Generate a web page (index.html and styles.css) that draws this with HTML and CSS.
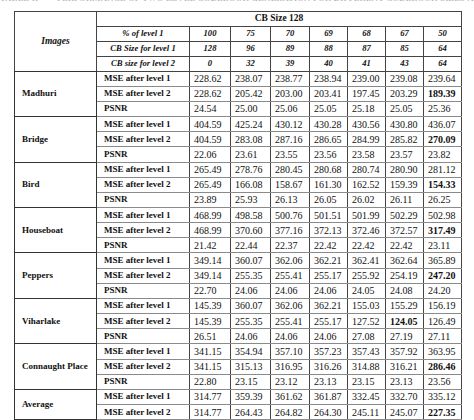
FILE: index.html
```html
<!DOCTYPE html>
<html>
<head>
<meta charset="utf-8">
<link rel="stylesheet" href="styles.css">
</head>
<body>
<div class="page">
  <div class="caption"><span class="tno">TABLE II</span><span class="ctext">PERFORMANCE OF TWO LEVEL CODEBOOK GENERATION FOR DIFFERENT CODEBOOK SIZES AT LEVEL 1 AND LEVEL 2</span></div>
  <table class="res">
    <colgroup>
      <col class="c0"><col class="c1">
      <col class="v1"><col class="v2"><col class="v3"><col class="v4"><col class="v5"><col class="v6"><col class="v7">
    </colgroup>
    <tbody class="head">
      <tr><th rowspan="4" class="img">Images</th><th colspan="8" class="cb">CB Size 128</th></tr>
      <tr><th class="hl">% of level 1</th><th>100</th><th>75</th><th>70</th><th>69</th><th>68</th><th>67</th><th>50</th></tr>
      <tr><th class="hl">CB Size for level 1</th><th>128</th><th>96</th><th>89</th><th>88</th><th>87</th><th>85</th><th>64</th></tr>
      <tr><th class="hl">CB size for level 2</th><th>0</th><th>32</th><th>39</th><th>40</th><th>41</th><th>43</th><th>64</th></tr>
    </tbody>
    <tbody class="grp">
      <tr><th rowspan="3" class="name">Madhuri</th><td class="lab">MSE after level 1</td><td>228.62</td><td>238.07</td><td>238.77</td><td>238.94</td><td>239.00</td><td>239.08</td><td>239.64</td></tr>
      <tr><td class="lab">MSE after level 2</td><td>228.62</td><td>205.42</td><td>203.00</td><td>203.41</td><td>197.45</td><td>203.29</td><td class="b">189.39</td></tr>
      <tr><td class="lab">PSNR</td><td>24.54</td><td>25.00</td><td>25.06</td><td>25.05</td><td>25.18</td><td>25.05</td><td>25.36</td></tr>
    </tbody>
    <tbody class="grp">
      <tr><th rowspan="3" class="name">Bridge</th><td class="lab">MSE after level 1</td><td>404.59</td><td>425.24</td><td>430.12</td><td>430.28</td><td>430.56</td><td>430.80</td><td>436.07</td></tr>
      <tr><td class="lab">MSE after level 2</td><td>404.59</td><td>283.08</td><td>287.16</td><td>286.65</td><td>284.99</td><td>285.82</td><td class="b">270.09</td></tr>
      <tr><td class="lab">PSNR</td><td>22.06</td><td>23.61</td><td>23.55</td><td>23.56</td><td>23.58</td><td>23.57</td><td>23.82</td></tr>
    </tbody>
    <tbody class="grp">
      <tr><th rowspan="3" class="name">Bird</th><td class="lab">MSE after level 1</td><td>265.49</td><td>278.76</td><td>280.45</td><td>280.68</td><td>280.74</td><td>280.90</td><td>281.12</td></tr>
      <tr><td class="lab">MSE after level 2</td><td>265.49</td><td>166.08</td><td>158.67</td><td>161.30</td><td>162.52</td><td>159.39</td><td class="b">154.33</td></tr>
      <tr><td class="lab">PSNR</td><td>23.89</td><td>25.93</td><td>26.13</td><td>26.05</td><td>26.02</td><td>26.11</td><td>26.25</td></tr>
    </tbody>
    <tbody class="grp">
      <tr><th rowspan="3" class="name">Houseboat</th><td class="lab">MSE after level 1</td><td>468.99</td><td>498.58</td><td>500.76</td><td>501.51</td><td>501.99</td><td>502.29</td><td>502.98</td></tr>
      <tr><td class="lab">MSE after level 2</td><td>468.99</td><td>370.60</td><td>377.16</td><td>372.13</td><td>372.46</td><td>372.57</td><td class="b">317.49</td></tr>
      <tr><td class="lab">PSNR</td><td>21.42</td><td>22.44</td><td>22.37</td><td>22.42</td><td>22.42</td><td>22.42</td><td>23.11</td></tr>
    </tbody>
    <tbody class="grp">
      <tr><th rowspan="3" class="name">Peppers</th><td class="lab">MSE after level 1</td><td>349.14</td><td>360.07</td><td>362.06</td><td>362.21</td><td>362.41</td><td>362.64</td><td>365.89</td></tr>
      <tr><td class="lab">MSE after level 2</td><td>349.14</td><td>255.35</td><td>255.41</td><td>255.17</td><td>255.92</td><td>254.19</td><td class="b">247.20</td></tr>
      <tr><td class="lab">PSNR</td><td>22.70</td><td>24.06</td><td>24.06</td><td>24.06</td><td>24.05</td><td>24.08</td><td>24.20</td></tr>
    </tbody>
    <tbody class="grp">
      <tr><th rowspan="3" class="name">Viharlake</th><td class="lab">MSE after level 1</td><td>145.39</td><td>360.07</td><td>362.06</td><td>362.21</td><td>155.03</td><td>155.29</td><td>156.19</td></tr>
      <tr><td class="lab">MSE after level 2</td><td>145.39</td><td>255.35</td><td>255.41</td><td>255.17</td><td>127.52</td><td class="b">124.05</td><td>126.49</td></tr>
      <tr><td class="lab">PSNR</td><td>26.51</td><td>24.06</td><td>24.06</td><td>24.06</td><td>27.08</td><td>27.19</td><td>27.11</td></tr>
    </tbody>
    <tbody class="grp">
      <tr><th rowspan="3" class="name">Connaught Place</th><td class="lab">MSE after level 1</td><td>341.15</td><td>354.94</td><td>357.10</td><td>357.23</td><td>357.43</td><td>357.92</td><td>363.95</td></tr>
      <tr><td class="lab">MSE after level 2</td><td>341.15</td><td>315.13</td><td>316.95</td><td>316.26</td><td>314.88</td><td>316.21</td><td class="b">286.46</td></tr>
      <tr><td class="lab">PSNR</td><td>22.80</td><td>23.15</td><td>23.12</td><td>23.13</td><td>23.15</td><td>23.13</td><td>23.56</td></tr>
    </tbody>
    <tbody class="grp">
      <tr><th rowspan="2" class="name">Average</th><td class="lab">MSE after level 1</td><td>314.77</td><td>359.39</td><td>361.62</td><td>361.87</td><td>332.45</td><td>332.70</td><td>335.12</td></tr>
      <tr><td class="lab">MSE after level 2</td><td>314.77</td><td>264.43</td><td>264.82</td><td>264.30</td><td>245.11</td><td>245.07</td><td class="b">227.35</td></tr>
    </tbody>
  </table>
</div>
</body>
</html>
```
FILE: styles.css
```css
html, body {
  margin: 0;
  padding: 0;
  background: #ffffff;
}
.page {
  width: 474px;
  height: 420px;
  overflow: hidden;
  padding-left: 14px;
  box-sizing: border-box;
  font-family: "Liberation Serif", "Times New Roman", serif;
  color: #111;
}
.caption {
  height: 18px;
  margin-left: -14px;
  margin-top: -7px;
  font-size: 9px;
  line-height: 11px;
  color: #a8a8a8;
  white-space: nowrap;
  overflow: hidden;
  letter-spacing: 0.2px;
}
.caption .tno {
  display: inline-block;
  width: 57px;
}
.res {
  border-collapse: collapse;
  table-layout: fixed;
  width: 447px;
  border: 1px solid #333;
}
.c0 { width: 82px; }
.c1 { width: 93px; }
.v1 { width: 41px; }
.v2 { width: 40px; }
.v3 { width: 39px; }
.v4 { width: 38px; }
.v5 { width: 38px; }
.v6 { width: 38px; }
.v7 { width: 38px; }
.res tr {
  height: 15.17px;
}
.res .head tr {
  height: 14.9px;
}
.res th, .res td {
  padding: 0 0 0 4px;
  border: 1px solid #444;
  line-height: 11px;
  white-space: nowrap;
  overflow: hidden;
  vertical-align: middle;
}
.res td {
  font-size: 10px;
  font-weight: normal;
  text-align: left;
  border-top-color: #8a8a8a;
  border-bottom-color: #8a8a8a;
}
.res td.b {
  font-weight: bold;
}
.res td.lab {
  font-weight: bold;
  font-size: 9px;
  padding-left: 7px;
}
.res .grp {
  border-top: 1px solid #333;
}
.res .grp tr:first-child td {
  border-top-color: #333;
}
.res .head th {
  font-size: 8.6px;
  font-style: italic;
  font-weight: bold;
  text-align: center;
  padding: 0;
}
.res .head th.cb {
  font-style: normal;
  font-size: 9.5px;
}
.res .head th.img {
  font-size: 9.5px;
  border-bottom-color: #333;
}
.res th.name {
  font-size: 9px;
  font-weight: bold;
  text-align: left;
  padding-left: 7px;
  border-color: #333;
}
```
